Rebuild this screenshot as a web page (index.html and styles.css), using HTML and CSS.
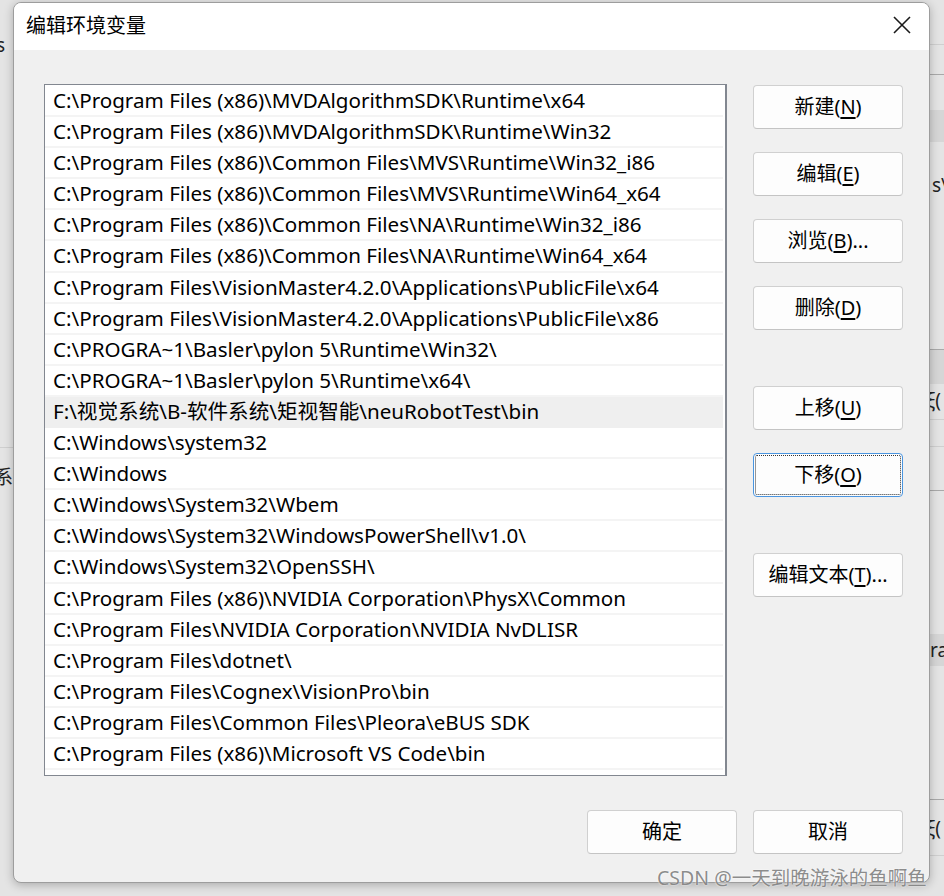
FILE: index.html
```html
<!DOCTYPE html>
<html lang="zh-CN">
<head>
    <meta charset="UTF-8">
    <title>编辑环境变量</title>
    <link rel="stylesheet" href="styles.css">
</head>
<body>
    <!-- 后面的系统属性窗口露出的一点边 -->
    <div class="backdrop">
        <span class="bg-text" style="left:-4px;top:32px">s</span>
        <span class="bg-text" style="left:-6px;top:462px">系</span>
        <span class="bg-line" style="left:0;top:447px;width:13px"></span>
        <span class="bg-line" style="left:930px;top:44px;width:14px"></span>
        <span class="bg-line dark" style="left:930px;top:74px;width:14px"></span>
        <span class="bg-band" style="left:930px;top:110px;height:32px"></span>
        <span class="bg-text" style="left:932px;top:172px">s\</span>
        <span class="bg-line dark" style="left:930px;top:349px;width:14px"></span>
        <span class="bg-band" style="left:930px;top:350px;height:34px"></span>
        <span class="bg-text" style="left:926px;top:387px">ξ(</span>
        <span class="bg-line" style="left:930px;top:419px;width:14px"></span>
        <span class="bg-line" style="left:930px;top:446px;width:14px"></span>
        <span class="bg-line dark" style="left:930px;top:490px;width:14px"></span>
        <span class="bg-band" style="left:930px;top:634px;height:32px"></span>
        <span class="bg-text" style="left:930px;top:637px">ra</span>
        <span class="bg-line dark" style="left:930px;top:799px;width:14px"></span>
        <span class="bg-text" style="left:926px;top:815px">ξ(</span>
        <span class="bg-line" style="left:930px;top:855px;width:14px"></span>
    </div>

    <div class="dialog">
        <div class="titlebar">
            <span class="title">编辑环境变量</span>
            <svg class="close" width="18" height="18" viewBox="0 0 18 18">
                <path d="M1 1 L17 17 M17 1 L1 17" stroke="#1a1a1a" stroke-width="1.6" fill="none"/>
            </svg>
        </div>

        <div class="content">
            <div class="main">
                <ul class="path-list">
                    <li>C:\Program Files (x86)\MVDAlgorithmSDK\Runtime\x64</li>
                    <li>C:\Program Files (x86)\MVDAlgorithmSDK\Runtime\Win32</li>
                    <li>C:\Program Files (x86)\Common Files\MVS\Runtime\Win32_i86</li>
                    <li>C:\Program Files (x86)\Common Files\MVS\Runtime\Win64_x64</li>
                    <li>C:\Program Files (x86)\Common Files\NA\Runtime\Win32_i86</li>
                    <li>C:\Program Files (x86)\Common Files\NA\Runtime\Win64_x64</li>
                    <li>C:\Program Files\VisionMaster4.2.0\Applications\PublicFile\x64</li>
                    <li>C:\Program Files\VisionMaster4.2.0\Applications\PublicFile\x86</li>
                    <li>C:\PROGRA~1\Basler\pylon 5\Runtime\Win32\</li>
                    <li>C:\PROGRA~1\Basler\pylon 5\Runtime\x64\</li>
                    <li class="selected">F:\视觉系统\B-软件系统\矩视智能\neuRobotTest\bin</li>
                    <li>C:\Windows\system32</li>
                    <li>C:\Windows</li>
                    <li>C:\Windows\System32\Wbem</li>
                    <li>C:\Windows\System32\WindowsPowerShell\v1.0\</li>
                    <li>C:\Windows\System32\OpenSSH\</li>
                    <li>C:\Program Files (x86)\NVIDIA Corporation\PhysX\Common</li>
                    <li>C:\Program Files\NVIDIA Corporation\NVIDIA NvDLISR</li>
                    <li>C:\Program Files\dotnet\</li>
                    <li>C:\Program Files\Cognex\VisionPro\bin</li>
                    <li>C:\Program Files\Common Files\Pleora\eBUS SDK</li>
                    <li>C:\Program Files (x86)\Microsoft VS Code\bin</li>
                    <li class="empty"></li>
                </ul>

                <div class="side-buttons">
                    <button class="btn">新建(<u>N</u>)</button>
                    <button class="btn">编辑(<u>E</u>)</button>
                    <button class="btn">浏览(<u>B</u>)...</button>
                    <button class="btn">删除(<u>D</u>)</button>
                    <button class="btn group-start">上移(<u>U</u>)</button>
                    <button class="btn focused">下移(<u>O</u>)</button>
                    <button class="btn group-start">编辑文本(<u>T</u>)...</button>
                </div>
            </div>

            <div class="footer">
                <button class="btn">确定</button>
                <button class="btn">取消</button>
            </div>
        </div>
    </div>

    <div class="watermark">CSDN @一天到晚游泳的鱼啊鱼</div>
</body>
</html>
```

FILE: styles.css
```css
/* 基本设置 */
body {
    margin: 0;
    width: 944px;
    height: 896px;
    overflow: hidden;
    position: relative;
    background-color: #e4e4e4;
    font-family: "Noto Sans", "Noto Sans CJK SC", sans-serif;
    color: #000;
}

/* 背景窗口碎片 */
.backdrop {
    position: absolute;
    left: 0;
    top: 0;
    width: 944px;
    height: 896px;
}

.bg-text {
    position: absolute;
    font-size: 19px;
    color: #222;
}

.bg-line {
    position: absolute;
    height: 1px;
    background-color: #cfcfcf;
}

.bg-line.dark {
    background-color: #a9a9a9;
}

.bg-band {
    position: absolute;
    left: 930px;
    width: 14px;
    background-color: #d6d6d6;
}

/* 对话框 */
.dialog {
    position: relative;
    margin: 2px 0 0 13px;
    width: 915px;
    height: 879px;
    border: 1px solid #9d9d9d;
    border-radius: 8px;
    background-color: #f0f0f0;
    box-shadow: 0 2px 10px rgba(0, 0, 0, 0.25);
    overflow: hidden;
    display: flex;
    flex-direction: column;
}

.titlebar {
    height: 47px;
    background-color: #fff;
    display: flex;
    align-items: center;
    justify-content: space-between;
    padding: 0 18px 0 12px;
    flex-shrink: 0;
}

.title {
    font-size: 20px;
    margin-top: -5px;
}

.close {
    margin-top: -3px;
}

.content {
    padding: 34px 26px 0 30px;
}

.main {
    display: flex;
    gap: 26px;
}

/* 路径列表 */
.path-list {
    list-style: none;
    margin: 0;
    padding: 1px 0 0;
    width: 681px;
    height: 689px;
    border: 1px solid #828790;
    border-right-width: 2px;
    background-color: #fff;
    overflow: hidden;
}

.path-list li {
    height: 29.1px;
    line-height: 29px;
    padding-left: 8px;
    margin-right: 2px;
    border-bottom: 2px solid #f4f4f4;
    font-size: 20.6px;
    white-space: nowrap;
}

.path-list li.selected {
    background-color: #efefef;
    border-bottom-color: #efefef;
}

/* 按钮 */
.side-buttons {
    display: flex;
    flex-direction: column;
    gap: 23px;
    padding-top: 1px;
}

.btn {
    position: relative;
    width: 150px;
    height: 44px;
    padding: 0 0 4px;
    font-family: "Noto Sans", "Noto Sans CJK SC", sans-serif;
    font-size: 20px;
    color: #000;
    background-color: #fdfdfd;
    border: 1px solid #d0d0d0;
    border-bottom-color: #c4c4c4;
    border-radius: 4px;
}

.btn u {
    text-underline-offset: 3px;
}

.btn.group-start {
    margin-top: 33px;
}

.btn.focused {
    border-color: #4a95e0;
}

.btn.focused::after {
    content: "";
    position: absolute;
    left: 1px;
    top: 1px;
    right: 1px;
    bottom: 1px;
    border: 1px dotted #333;
    border-radius: 2px;
}

.footer {
    display: flex;
    justify-content: flex-end;
    gap: 16px;
    margin-top: 34px;
}

/* 水印 */
.watermark {
    position: absolute;
    left: 657px;
    top: 862px;
    font-size: 19.5px;
    color: rgba(120, 120, 120, 0.85);
    text-shadow: 0 0 2px #fff;
    white-space: nowrap;
}
```
